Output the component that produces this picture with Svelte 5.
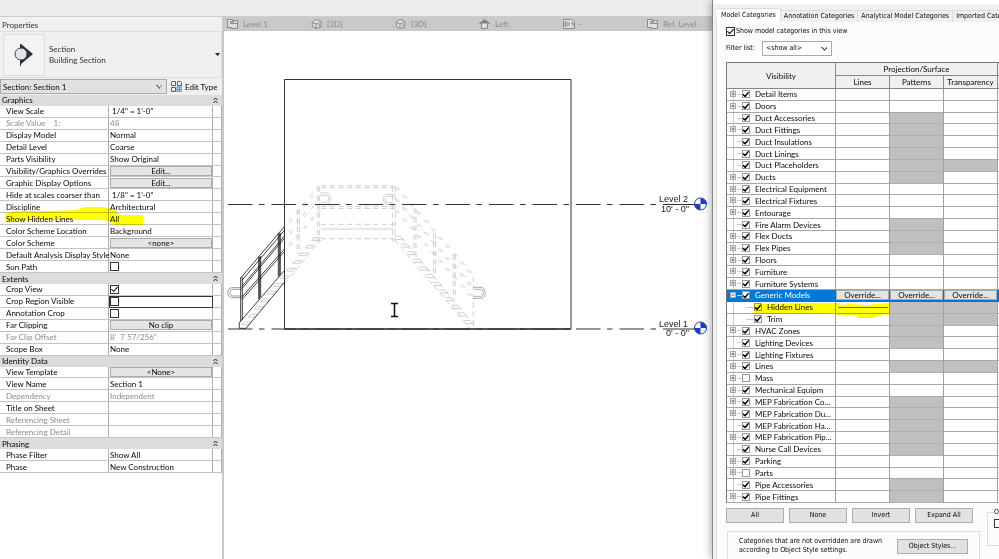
<script lang="ts">
  // Section view with the properties palette on the left and the
  // Visibility/Graphics dialog docked on the right.
  type Prop = {
    name: string
    value?: string
    kind?: 'text' | 'scale' | 'button' | 'check'
    muted?: boolean
    checked?: boolean
    current?: boolean
    marked?: boolean
  }
  type Category = {
    name: string
    open?: boolean
    leaf?: boolean
    child?: boolean
    off?: boolean
    gray?: string
    selected?: boolean
    marked?: boolean
  }

  const groups: { title: string; props: Prop[] }[] = [
    {
      title: 'Graphics',
      props: [
        { name: 'View Scale', value: '1/4" = 1\'-0"', kind: 'scale' },
        { name: 'Scale Value \u00a0\u00a0 1:', value: '48', muted: true },
        { name: 'Display Model', value: 'Normal' },
        { name: 'Detail Level', value: 'Coarse' },
        { name: 'Parts Visibility', value: 'Show Original' },
        { name: 'Visibility/Graphics Overrides', value: 'Edit...', kind: 'button' },
        { name: 'Graphic Display Options', value: 'Edit...', kind: 'button' },
        { name: 'Hide at scales coarser than', value: '1/8" = 1\'-0"', kind: 'scale' },
        { name: 'Discipline', value: 'Architectural' },
        { name: 'Show Hidden Lines', value: 'All', marked: true },
        { name: 'Color Scheme Location', value: 'Background' },
        { name: 'Color Scheme', value: '<none>', kind: 'button' },
        { name: 'Default Analysis Display Style', value: 'None' },
        { name: 'Sun Path', kind: 'check' }
      ]
    },
    {
      title: 'Extents',
      props: [
        { name: 'Crop View', kind: 'check', checked: true },
        { name: 'Crop Region Visible', kind: 'check', current: true },
        { name: 'Annotation Crop', kind: 'check' },
        { name: 'Far Clipping', value: 'No clip', kind: 'button' },
        { name: 'Far Clip Offset', value: "8' \u00a07 57/256\"", muted: true },
        { name: 'Scope Box', value: 'None' }
      ]
    },
    {
      title: 'Identity Data',
      props: [
        { name: 'View Template', value: '<None>', kind: 'button' },
        { name: 'View Name', value: 'Section 1' },
        { name: 'Dependency', value: 'Independent', muted: true },
        { name: 'Title on Sheet' },
        { name: 'Referencing Sheet', muted: true },
        { name: 'Referencing Detail', muted: true }
      ]
    },
    {
      title: 'Phasing',
      props: [
        { name: 'Phase Filter', value: 'Show All' },
        { name: 'Phase', value: 'New Construction' }
      ]
    }
  ]

  const views = [
    { icon: 'plan', name: 'Level 1' },
    { icon: 'cube', name: '{3D}' },
    { icon: 'cube', name: '{3D}' },
    { icon: 'house', name: 'Left' },
    { icon: 'sheet', name: '-' },
    { icon: 'plan', name: 'Ref. Level' }
  ]

  // gray: P = patterns not available, T = transparency not available
  const categories: Category[] = [
    { name: 'Detail Items' },
    { name: 'Doors' },
    { name: 'Duct Accessories', leaf: true, gray: 'P' },
    { name: 'Duct Fittings', gray: 'P' },
    { name: 'Duct Insulations', leaf: true, gray: 'P' },
    { name: 'Duct Linings', leaf: true, gray: 'P' },
    { name: 'Duct Placeholders', leaf: true, gray: 'PT' },
    { name: 'Ducts', gray: 'P' },
    { name: 'Electrical Equipment' },
    { name: 'Electrical Fixtures' },
    { name: 'Entourage' },
    { name: 'Fire Alarm Devices', leaf: true, gray: 'P' },
    { name: 'Flex Ducts', gray: 'P' },
    { name: 'Flex Pipes', gray: 'P' },
    { name: 'Floors' },
    { name: 'Furniture' },
    { name: 'Furniture Systems' },
    { name: 'Generic Models', open: true, selected: true },
    { name: 'Hidden Lines', child: true, gray: 'PT', marked: true },
    { name: 'Trim', child: true, gray: 'PT' },
    { name: 'HVAC Zones', gray: 'P' },
    { name: 'Lighting Devices', leaf: true, gray: 'P' },
    { name: 'Lighting Fixtures' },
    { name: 'Lines', gray: 'PT' },
    { name: 'Mass', off: true },
    { name: 'Mechanical Equipm' },
    { name: 'MEP Fabrication Co...', gray: 'P' },
    { name: 'MEP Fabrication Du...', gray: 'P' },
    { name: 'MEP Fabrication Ha...', leaf: true, gray: 'P' },
    { name: 'MEP Fabrication Pip...', gray: 'P' },
    { name: 'Nurse Call Devices', leaf: true, gray: 'P' },
    { name: 'Parking' },
    { name: 'Parts', off: true },
    { name: 'Pipe Accessories', leaf: true, gray: 'P' },
    { name: 'Pipe Fittings', gray: 'P' }
  ]

  const leftTreads = Array.from({ length: 12 }, (_, i) => [66 + i * 19, 464 - i * 23])
  const rightTreads = Array.from({ length: 12 }, (_, i) => [526 + i * 19, 208 + i * 23])
</script>

<div class="app">
  <div class="workspace">
    <div class="ribbon"></div>
    <div class="body">
      <aside class="palette">
        <h2>Properties</h2>
        <div class="type">
          <div class="preview">
            <svg width="20" height="24" viewBox="0 0 20 24">
              <path d="M7 1 L19 11 L7 21 V23 H6 V1 Z" fill="#2b2f38" />
              <circle cx="7" cy="11" r="6" fill="#dfe5ec" stroke="#3f444e" />
            </svg>
          </div>
          <div class="type-name">
            <span>Section</span>
            <span>Building Section</span>
          </div>
          <svg class="drop" width="5" height="3" viewBox="0 0 5 3"><path d="M0 0h5L2.500 3z" fill="#222" /></svg>
        </div>
        <div class="instance">
          <select aria-label="Instance"><option>Section: Section 1</option></select>
          <button class="edit-type">
            <svg width="11" height="11" viewBox="0 0 11 11" fill="none" stroke="#555c66">
              <path d="M1 .5h3.500v4H.5v-3zM6.500.5h3l1 1v3h-4zM.5 6.500h4v4h-4z" />
              <path d="M6 6h5v5h-5z" fill="#dcebf8" stroke="#4a86c0" />
              <path d="M6 8.500h5M8.500 6v5" stroke="#4a86c0" />
            </svg>
            Edit Type
          </button>
        </div>
        <table class="props">
          <colgroup><col class="c-name" /><col /><col class="c-end" /></colgroup>
          {#each groups as group (group.title)}
            <tbody>
              <tr class="group">
                <th colspan="2">{group.title}</th>
                <th>
                  <svg width="5" height="7" viewBox="0 0 5 7" fill="none" stroke="#222">
                    <path d="M.5 3L2.500 1L4.500 3M.5 6L2.500 4L4.500 6" />
                  </svg>
                </th>
              </tr>
              {#each group.props as p (p.name)}
                <tr class:muted={p.muted} class:marked={p.marked}>
                  <td class="name">
                    {p.name}
                    {#if p.marked}
                      <svg class="marker" width="138" height="20" viewBox="0 0 138 20">
                        <path
                          d="M0 8Q8 4 24 5Q50 5 72 4Q78 0 92 1Q106 1 112 6L115 9L137 9Q139 13 138 19L110 19Q104 15 98 14Q60 14 30 14L1 16Z"
                          fill="#ff0"
                        />
                      </svg>
                    {/if}
                  </td>
                  <td class="value" class:scale={p.kind === 'scale'} class:current={p.current}>
                    {#if p.kind === 'button'}
                      <button class="cell-btn" aria-label="{p.name}: {p.value}">{p.value}</button>
                    {:else if p.kind === 'check'}
                      <input type="checkbox" class="thin" aria-label={p.name} checked={p.checked} />
                    {:else}
                      {p.value ?? ''}
                    {/if}
                  </td>
                  <td></td>
                </tr>
              {/each}
            </tbody>
          {/each}
        </table>
      </aside>

      <main>
        <nav>
          {#each views as v, i (i)}
            <button class="view">
              <svg width="12" height="10" viewBox="0 0 12 10" fill="none" stroke="#858a90">
                {#if v.icon === 'plan'}
                  <path d="M.5.5h5v2h-2v2h3v-3h4v8h-6v-1h-4z" fill="#dde0e3" />
                  <path d="M7 4.500h3.500" />
                {:else if v.icon === 'cube'}
                  <path d="M1 3.500L4.500.7L9 1.500L10.500 5L9 8.500L5 9.500L1.500 7.500z" fill="#dde0e3" />
                  <path d="M1 3.500L5 5L10 3M5 5V9.500M7 6h2v2.500" />
                {:else if v.icon === 'house'}
                  <path d="M.5 4.500L5.500.5L10.500 4.500z" fill="#777c82" />
                  <path d="M2.500 4.500v5h6v-5" fill="#dde0e3" />
                {:else}
                  <path d="M.5.5h8l3 2v7h-11z" fill="#dde0e3" />
                  <path d="M2 3h2v4h-2zM6 3v4M8 4h2v3" />
                {/if}
              </svg>
              {v.name}
            </button>
          {/each}
        </nav>
        <svg class="drawing" viewBox="224 31 488 528" preserveAspectRatio="xMinYMin slice">
          <!-- hidden flights, drawn dashed in light gray -->
          <g transform="translate(220 170) scale(.3333)" fill="none" stroke="#bcbcbc" stroke-width="2.200">
            {#each leftTreads as [x, y], i (i)}
              <path d="M{x} {y}l7 -8h20l-6 8z" />
            {/each}
            {#each rightTreads as [x, y], i (i)}
              <path d="M{x} {y}h24l-8 -9h-18M{x + 24} {y}l3 6" />
            {/each}
            <g stroke-dasharray="16 10">
              <path d="M303 47H523M303 53H523M303 109H523M303 115H523M303 163H523M303 206H523" />
              <path d="M232 118V252M238 118V252M292 50V215M298 50V215M518 50V215M526 50V215" />
              <path d="M582 115V250M588 115V250M641 190V320M647 190V320M700 255V388M706 255V388M760 320V475" />
              <path d="M194 340L303 210M525 212L752 477" />
            </g>
            <g stroke-dasharray="13 20">
              <path d="M206 154L296 48M210 159L300 54M206 186L296 80M210 192L300 86M206 224L300 118M210 229L300 124" />
              <path d="M525 50L760 322M531 50L762 316M525 86L760 358M531 86L762 352M525 120L760 390M531 120L762 384" />
            </g>
            <path d="M303 177H523" />
            <path d="M300 69H324Q332 74 332 86Q332 98 322 103H302M300 76H320Q326 78 326 86Q326 94 318 97H302" />
            <path d="M526 73H500Q490 76 490 88Q490 100 500 103H522M522 79H502Q496 82 496 88Q496 96 502 98H520" />
            <path d="M760 352H786Q796 354 796 368Q796 382 786 385H760M762 358H784Q790 360 790 368Q790 377 784 379H762" stroke="#8c8c8c" />
            <path d="M64 353H34Q23 355 23 367Q23 381 34 383H64M64 358H36Q30 360 30 367Q30 376 36 378H64" stroke="#777" />
          </g>

          <!-- cut railing -->
          <g transform="translate(220 170) scale(.3333)" fill="none" stroke="#1c1c1c" stroke-width="2.500">
            <path d="M62 322V455M67 322V450M116 260V388M119 260V386M122 258V382M175 190V320M178 190V318M181 188V314" />
            <path d="M62 324L194 169M66 331L194 180M66 349L194 197M66 356L194 204M66 381L194 236M66 389L194 244" />
            <path d="M194 301L58 458V475H78L194 336" />
          </g>

          <g fill="none" stroke="#333">
            <path d="M284.500 329V79.500H571V329" />
            <path d="M284 329H571" stroke="#555" stroke-width="2" />
            <path d="M228 204.500H657M228 329H657" stroke-dasharray="24.500 6.500 5.500 7" />
            <path d="M663 204.500H695M663 329H695" />
          </g>

          <g class="level" fill="#222">
            <text x="659" y="202">Level 2</text>
            <text x="661" y="212">10' - 0"</text>
            <text x="659" y="327">Level 1</text>
            <text x="666" y="336">0' - 0"</text>
          </g>
          {#each [204, 328] as y (y)}
            <circle cx="700.500" cy={y} r="6" fill="#fff" stroke="#1b3fc0" />
            <path d="M700.500 {y}v-6a6 6 0 0 1 6 6zM700.500 {y}v6a6 6 0 0 1 -6 -6z" fill="#1b3fc0" />
          {/each}

          <path d="M391 303.500H398M391 316.500H398M394.500 303V317" stroke="#111" stroke-width="1.500" />
        </svg>
      </main>
    </div>
  </div>

  <section class="dialog" aria-label="Visibility/Graphic Overrides">
    <div class="tabs" role="tablist">
      <button role="tab" aria-selected="true" class="active">Model Categories</button>
      <button role="tab" aria-selected="false">Annotation Categories</button>
      <button role="tab" aria-selected="false">Analytical Model Categories</button>
      <button role="tab" aria-selected="false">Imported Categories</button>
    </div>
    <div class="page">
      <label class="show"><input type="checkbox" class="thin" checked /> Show model categories in this view</label>
      <div class="filter">
        <label for="filter">Filter list:</label>
        <select id="filter"><option>&lt;show all&gt;</option></select>
      </div>
      <table class="cats">
        <colgroup><col class="c-vis" /><col /><col /><col /><col /></colgroup>
        <thead>
          <tr><th rowspan="2">Visibility</th><th colspan="3">Projection/Surface</th><th></th></tr>
          <tr><th>Lines</th><th>Patterns</th><th>Transparency</th><th></th></tr>
        </thead>
        <tbody>
          {#each categories as c (c.name)}
            <tr class:selected={c.selected} class:marked={c.marked}>
              <td class="tree">
                <div class="node" class:child={c.child}>
                  {#if c.leaf || c.child}
                    <i class="stub"></i>
                  {:else}
                    <button class="expander" aria-label="{c.open ? 'Collapse' : 'Expand'} {c.name}">
                      <svg width="7" height="7" viewBox="0 0 7 7" fill="none">
                        <rect x=".5" y=".5" width="5" height="5" fill="#f4f4f4" stroke="#a8a8a8" />
                        <path d={c.open ? 'M1.500 3h3' : 'M1.500 3h3M3 1.500v3'} stroke="#5a6ea8" />
                      </svg>
                    </button>
                  {/if}
                  <i class="dots"></i>
                  <label><input type="checkbox" checked={!c.off} />{c.name}</label>
                </div>
                {#if c.marked}
                  <svg class="marker" width="136" height="18" viewBox="0 0 136 18">
                    <path d="M0 2L50 1L86 1V3L96 2L112 3L136 1V12L126 13L118 16L104 16L102 13L82 13V11L0 12Z" fill="#ff0" />
                  </svg>
                {/if}
              </td>
              <td>
                {#if c.selected}<button class="cell-btn">Override...</button>{/if}
                {#if c.marked}<div class="pen"></div>{/if}
              </td>
              <td class:na={c.gray?.includes('P')}>
                {#if c.selected}<button class="cell-btn">Override...</button>{/if}
              </td>
              <td class:na={c.gray?.includes('T')}>
                {#if c.selected}<button class="cell-btn">Override...</button>{/if}
              </td>
              <td></td>
            </tr>
          {/each}
        </tbody>
      </table>
      <div class="lower">
        <div>
          <div class="actions">
            <button>All</button>
            <button>None</button>
            <button>Invert</button>
            <button>Expand All</button>
          </div>
          <div class="note">
            <p>Categories that are not overridden are drawn<br />according to Object Style settings.</p>
            <button>Object Styles...</button>
          </div>
        </div>
        <fieldset>
          <legend>Override Host Layers</legend>
          <input type="checkbox" class="thin" aria-label="Cut Line Styles" />
        </fieldset>
      </div>
    </div>
  </section>
</div>

<style>
  :global(body) {
    margin: 0;
  }
  .app {
    display: grid;
    grid-template-columns: minmax(0, 1fr) 287px;
    height: 100vh;
    overflow: hidden;
    background: #fff;
    color: #080808;
    font: 8px/10px Lato, 'Open Sans', sans-serif;
  }
  .app * {
    box-sizing: border-box;
  }
  button,
  select {
    margin: 0;
    padding: 0;
    border: 0;
    background: none;
    color: inherit;
    font: inherit;
    white-space: nowrap;
  }
  table {
    border-spacing: 0;
    table-layout: fixed;
  }
  th,
  td {
    padding: 0;
    font-weight: 400;
    white-space: nowrap;
  }
  svg {
    display: block;
    flex: none;
  }
  input {
    display: block;
    flex: none;
    appearance: none;
    width: 8px;
    height: 8px;
    margin: 0;
    border: 1px solid #999;
    background: #fff;
  }
  input:checked::before {
    content: '';
    display: block;
    width: 6px;
    height: 6px;
    background: #000;
    clip-path: polygon(0 40%, 35% 62%, 90% 0, 100% 22%, 38% 100%, 0 70%);
  }
  input.thin {
    width: 9px;
    height: 9px;
    border-color: #333;
  }
  input.thin:checked::before {
    width: 7px;
    height: 7px;
    clip-path: polygon(0 50%, 12% 42%, 38% 68%, 90% 12%, 100% 22%, 38% 88%);
  }
  .marked {
    position: relative;
  }
  .marker {
    position: absolute;
    z-index: 1;
    mix-blend-mode: multiply;
    pointer-events: none;
  }

  .workspace {
    display: flex;
    flex-direction: column;
    min-width: 0;
  }
  .ribbon {
    flex: none;
    height: 17px;
    border-bottom: 1px solid #ccc;
    background: #eee;
  }
  .body {
    display: grid;
    grid-template-columns: 224px minmax(0, 1fr);
    flex: 1;
    min-height: 0;
  }

  .palette {
    border-right: 2px solid #c8c8c8;
    background: #fff;
  }
  h2 {
    margin: 0;
    padding: 3px 2px 1px;
    background: #f0f0f0;
    font: inherit;
    color: #333;
  }
  .type {
    display: flex;
    align-items: center;
    gap: 4px;
    height: 47px;
    padding: 0 1px 0 3px;
    border: 1px solid #ddd;
    border-left: 0;
    background: #f0f0f0;
    color: #333;
  }
  .preview {
    display: grid;
    place-items: center;
    width: 42px;
    height: 42px;
    border: 1px solid #ddd;
    background: #f3f3f3;
  }
  .type-name {
    display: flex;
    flex: 1;
    flex-direction: column;
    gap: 1px;
  }
  .instance {
    display: flex;
    align-items: center;
    gap: 4px;
    padding: 1px 0;
    background: #f0f0f0;
  }
  select {
    appearance: none;
    height: 15px;
    padding: 0 3px;
    border: 1px solid #aaa;
    border-radius: 0;
    background:
      linear-gradient(45deg, transparent 50%, #777 50%, #777 70%, transparent 70%) right 6px center / 4px 4px no-repeat,
      linear-gradient(-45deg, transparent 50%, #777 50%, #777 70%, transparent 70%) right 3px center / 4px 4px no-repeat,
      #e1e1e1;
  }
  .instance select {
    flex: 1;
    padding: 0 2px;
  }
  .edit-type {
    display: flex;
    align-items: center;
    gap: 3px;
    width: 51px;
  }
  .props {
    width: 222px;
    height: 378px;
  }
  .c-name {
    width: 109px;
  }
  .c-end {
    width: 9px;
  }
  .props td {
    border-right: 1px solid #b0b0b0;
    border-bottom: 1px solid #c4c4c4;
  }
  .group th {
    padding-left: 2px;
    background: #dcdcdc;
    text-align: left;
  }
  .group th + th {
    padding-left: 0;
  }
  .props .name {
    padding-left: 6px;
  }
  .props .value {
    padding-left: 1px;
  }
  .props .scale {
    padding-left: 3px;
  }
  .props .current {
    outline: 1px solid #333;
    outline-offset: -1px;
  }
  .muted {
    color: #8c8c8c;
  }
  .props .marker {
    top: -7px;
    left: 5px;
  }
  .cell-btn {
    display: block;
    width: 100%;
    height: 10px;
    border: 1px solid #aaa;
    background: #e4e4e4;
    line-height: 8px;
  }

  main {
    display: flex;
    flex-direction: column;
    min-height: 0;
  }
  nav {
    display: flex;
    flex: none;
    height: 14px;
    background: #c9c9c9;
    overflow: hidden;
  }
  .view {
    display: flex;
    flex: none;
    align-items: center;
    gap: 4px;
    width: 84px;
    padding-left: 3px;
    color: #8b8b8b;
  }
  .drawing {
    flex: 1;
    width: 100%;
    min-height: 0;
  }
  .level {
    font: 9px 'Liberation Sans', Arial, sans-serif;
  }

  .dialog {
    display: flex;
    flex-direction: column;
    min-width: 0;
    padding: 4px 0 0 3px;
    border-left: 1px solid #858585;
    background: linear-gradient(#fff 4px, #f0f0f0 4px);
    box-shadow: 0 0 9px rgba(0, 0, 0, 0.4);
    overflow: hidden;
    z-index: 1;
  }
  .tabs,
  .show,
  .filter,
  .lower {
    font: 7px/9px 'DejaVu Sans Condensed', 'DejaVu Sans', sans-serif;
  }
  .tabs {
    display: flex;
    flex: none;
    align-items: flex-end;
    height: 18px;
    padding-left: 1px;
  }
  .tabs button {
    flex: none;
    height: 12px;
    padding: 0 3px;
    border: 1px solid #dcdcdc;
    border-left: 0;
    border-bottom: 0;
    background: #f0f0f0;
  }
  .tabs .active {
    height: 14px;
    padding: 0 4px;
    background: #fff;
  }
  .page {
    flex: 1;
    min-height: 0;
    padding: 5px 0 0 9px;
    border-left: 1px solid #dcdcdc;
    background: #fcfcfc;
    overflow: hidden;
  }
  .show {
    display: flex;
    align-items: center;
    gap: 1px;
  }
  .filter {
    display: flex;
    align-items: center;
    gap: 7px;
    padding: 5px 0 6px;
  }
  .filter select {
    width: 70px;
    background-color: #fff;
  }
  .cats {
    width: 311px;
    height: 441px;
    border-top: 1px solid #777;
    border-left: 1px solid #777;
    background: #fff;
  }
  .c-vis {
    width: 109px;
  }
  .cats col + col {
    width: 54px;
  }
  .cats col:last-child {
    width: 40px;
  }
  .cats th {
    height: 13px;
    border-right: 1px solid #888;
    border-bottom: 1px solid #888;
    background: #f0f0f0;
  }
  .cats td {
    border-right: 1px solid #a0a0a0;
    border-bottom: 1px solid #a8a8a8;
  }
  .cats td.na {
    border-bottom-color: #b0b0b0;
    background: #c0c0c0;
  }
  .cats .tree {
    background: linear-gradient(#ccc, #ccc) 6px 0 / 1px 100% no-repeat;
  }
  .node {
    display: flex;
    align-items: center;
    padding-left: 3px;
  }
  .expander,
  .stub {
    width: 7px;
  }
  .dots {
    width: 5px;
    border-top: 1px solid #ccc;
  }
  .node label {
    display: flex;
    align-items: center;
    gap: 5px;
  }
  .child .dots {
    width: 9px;
    margin-left: 9px;
  }
  .node.child label {
    margin-left: -1px;
  }
  .cats .selected td {
    border-color: #0078d7;
    background: #0078d7;
  }
  .selected label {
    color: #fff;
  }
  .cats .marker {
    top: 0;
    left: 27px;
  }
  .pen {
    width: 50px;
    margin: 0 auto;
    border-top: 1px solid #777;
  }

  .lower {
    display: flex;
    align-items: flex-start;
    gap: 7px;
    padding-top: 5px;
  }
  .lower button {
    height: 15px;
    border: 1px solid #adadad;
    background: #e1e1e1;
  }
  .actions {
    display: flex;
    gap: 5px;
  }
  .actions button {
    width: 58px;
  }
  .note {
    display: flex;
    align-items: flex-start;
    justify-content: space-between;
    width: 253px;
    height: 60px;
    margin: 8px 0 0 1px;
    padding: 5px 11px;
    border: 1px solid #dcdcdc;
  }
  .note p {
    margin: 0;
  }
  .note button {
    width: 71px;
    margin-top: 2px;
  }
  fieldset {
    flex: none;
    width: 120px;
    height: 38px;
    margin: 0;
    padding: 2px 6px;
    border: 1px solid #dcdcdc;
  }
  legend {
    padding: 0;
  }
</style>
